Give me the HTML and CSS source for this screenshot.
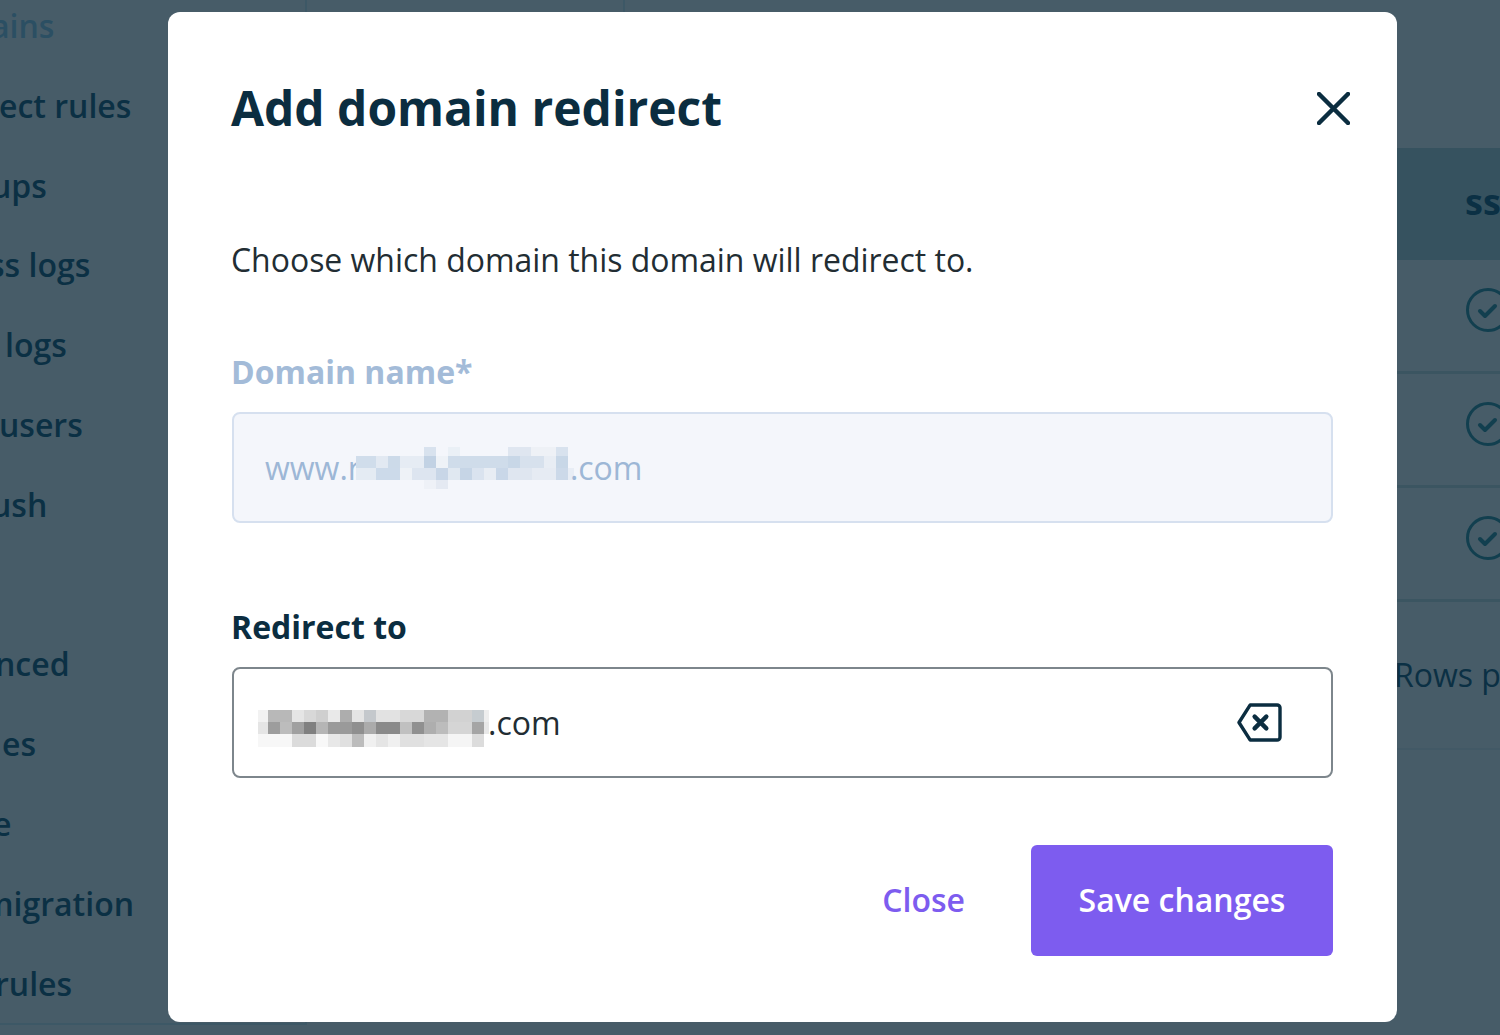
FILE: index.html
```html
<!DOCTYPE html>
<html lang="en">

<head>
    <meta charset="UTF-8">
    <meta name="viewport" content="width=device-width, initial-scale=1.0">
    <title>Add domain redirect</title>
    <link rel="stylesheet" href="styles.css">
</head>

<body>
    <div class="page">
        <ul class="side">
            <li class="faded cut-9">ains</li>
            <li class="cut-1">ect rules</li>
            <li class="cut-9">ups</li>
            <li class="cut-11">ss logs</li>
            <li class="push">logs</li>
            <li class="cut-1">users</li>
            <li class="cut-9">ush</li>
            <li class="empty"></li>
            <li class="cut-5">nced</li>
            <li class="push-2">es</li>
            <li class="cut-7">e</li>
            <li class="cut-17">migration</li>
            <li class="cut-5">rules</li>
        </ul>
        <div class="middle"></div>
        <div class="main">
            <div class="row head"><b>ss</b></div>
            <div class="row">
                <svg class="check" viewBox="0 0 44 44"><circle cx="22" cy="22" r="20.5"/><path d="M14 23l5 5 10-10"/></svg>
            </div>
            <div class="row">
                <svg class="check" viewBox="0 0 44 44"><circle cx="22" cy="22" r="20.5"/><path d="M14 23l5 5 10-10"/></svg>
            </div>
            <div class="row">
                <svg class="check" viewBox="0 0 44 44"><circle cx="22" cy="22" r="20.5"/><path d="M14 23l5 5 10-10"/></svg>
            </div>
            <div class="row foot">Rows p</div>
        </div>
    </div>

    <div class="overlay">
        <div class="modal">
            <div class="modal-top">
                <h2>Add domain redirect</h2>
                <svg class="close-icon" viewBox="0 0 33 33"><path d="M2 2l29 29M31 2L2 31"/></svg>
            </div>
            <p class="desc">Choose which domain this domain will redirect to.</p>

            <label class="label off">Domain name*</label>
            <div class="field disabled">
                <span>www.r</span>
                <svg class="blur blur1" viewBox="0 0 218 42" shape-rendering="crispEdges">
                    <rect x="68" y="0" width="12" height="9" fill="#d8e2ee"/>
                    <rect x="92" y="0" width="12" height="9" fill="#eaf0f6"/>
                    <rect x="152" y="0" width="23" height="9" fill="#dfe6f0"/>
                    <rect x="175" y="0" width="25" height="9" fill="#eef1f6"/>
                    <rect x="200" y="0" width="12" height="9" fill="#d8e2ee"/>
                    <rect x="0" y="9" width="20" height="12" fill="#d0ddeb"/>
                    <rect x="20" y="9" width="12" height="12" fill="#e2e9f2"/>
                    <rect x="32" y="9" width="12" height="12" fill="#ccdae9"/>
                    <rect x="44" y="9" width="24" height="12" fill="#e6ecf4"/>
                    <rect x="68" y="9" width="12" height="12" fill="#c2d2e4"/>
                    <rect x="80" y="9" width="12" height="12" fill="#eef2f7"/>
                    <rect x="92" y="9" width="60" height="12" fill="#cfdcea"/>
                    <rect x="152" y="9" width="12" height="12" fill="#c8d7e7"/>
                    <rect x="164" y="9" width="24" height="12" fill="#d7e1ed"/>
                    <rect x="188" y="9" width="12" height="12" fill="#e8edf4"/>
                    <rect x="200" y="9" width="12" height="12" fill="#c8d7e7"/>
                    <rect x="0" y="21" width="20" height="12" fill="#e4ebf3"/>
                    <rect x="20" y="21" width="24" height="12" fill="#ccdaea"/>
                    <rect x="44" y="21" width="12" height="12" fill="#eef2f7"/>
                    <rect x="56" y="21" width="24" height="12" fill="#dde5f0"/>
                    <rect x="80" y="21" width="12" height="12" fill="#c8d6e7"/>
                    <rect x="92" y="21" width="12" height="12" fill="#e0e8f1"/>
                    <rect x="104" y="21" width="12" height="12" fill="#c6d5e6"/>
                    <rect x="116" y="21" width="12" height="12" fill="#dae3ef"/>
                    <rect x="128" y="21" width="12" height="12" fill="#e8edf4"/>
                    <rect x="140" y="21" width="12" height="12" fill="#c9d7e8"/>
                    <rect x="152" y="21" width="24" height="12" fill="#dfe6f0"/>
                    <rect x="176" y="21" width="24" height="12" fill="#e6ebf3"/>
                    <rect x="200" y="21" width="12" height="12" fill="#ccd9e9"/>
                    <rect x="212" y="21" width="6" height="12" fill="#e8edf5"/>
                    <rect x="68" y="33" width="12" height="9" fill="#eef1f7"/>
                    <rect x="80" y="33" width="12" height="9" fill="#e4e9f2"/>
                </svg>
                <span>.com</span>
            </div>

            <label class="label">Redirect to</label>
            <div class="field">
                <svg class="blur blur2" viewBox="0 0 231 37" shape-rendering="crispEdges">
                    <rect x="0" y="0" width="10" height="12" fill="#f2f2f2"/>
                    <rect x="10" y="0" width="24" height="12" fill="#b8b8b8"/>
                    <rect x="34" y="0" width="12" height="12" fill="#e5e5e5"/>
                    <rect x="46" y="0" width="12" height="12" fill="#d8d8d8"/>
                    <rect x="58" y="0" width="12" height="12" fill="#cfcfcf"/>
                    <rect x="70" y="0" width="12" height="12" fill="#e9e9e9"/>
                    <rect x="82" y="0" width="12" height="12" fill="#adadad"/>
                    <rect x="94" y="0" width="12" height="12" fill="#e4e4e4"/>
                    <rect x="106" y="0" width="12" height="12" fill="#c4c8cc"/>
                    <rect x="118" y="0" width="24" height="12" fill="#e2e2e2"/>
                    <rect x="142" y="0" width="24" height="12" fill="#d8d8d8"/>
                    <rect x="166" y="0" width="24" height="12" fill="#b2b2b2"/>
                    <rect x="190" y="0" width="24" height="12" fill="#d2d2d2"/>
                    <rect x="214" y="0" width="12" height="12" fill="#c6ccd0"/>
                    <rect x="226" y="0" width="5" height="12" fill="#eeeeee"/>
                    <rect x="0" y="12" width="10" height="12" fill="#e5e5e5"/>
                    <rect x="10" y="12" width="12" height="12" fill="#9d9d9d"/>
                    <rect x="22" y="12" width="12" height="12" fill="#bcbcbc"/>
                    <rect x="34" y="12" width="12" height="12" fill="#a0a0a0"/>
                    <rect x="46" y="12" width="12" height="12" fill="#808080"/>
                    <rect x="58" y="12" width="12" height="12" fill="#b5b5b5"/>
                    <rect x="70" y="12" width="24" height="12" fill="#9a9a9a"/>
                    <rect x="94" y="12" width="12" height="12" fill="#8f8f8f"/>
                    <rect x="106" y="12" width="12" height="12" fill="#ababab"/>
                    <rect x="118" y="12" width="24" height="12" fill="#8a8a8a"/>
                    <rect x="142" y="12" width="12" height="12" fill="#c0c0c0"/>
                    <rect x="154" y="12" width="12" height="12" fill="#909090"/>
                    <rect x="166" y="12" width="12" height="12" fill="#aeaeae"/>
                    <rect x="178" y="12" width="12" height="12" fill="#bcbcbc"/>
                    <rect x="190" y="12" width="24" height="12" fill="#d5d5d5"/>
                    <rect x="214" y="12" width="12" height="12" fill="#a5a5a5"/>
                    <rect x="226" y="12" width="5" height="12" fill="#e8e8e8"/>
                    <rect x="0" y="24" width="34" height="13" fill="#f7f7f7"/>
                    <rect x="34" y="24" width="24" height="13" fill="#dbdbdb"/>
                    <rect x="58" y="24" width="12" height="13" fill="#f8f8f8"/>
                    <rect x="70" y="24" width="12" height="13" fill="#e8e8e8"/>
                    <rect x="82" y="24" width="12" height="13" fill="#e0e0e0"/>
                    <rect x="94" y="24" width="12" height="13" fill="#bcbcbc"/>
                    <rect x="106" y="24" width="12" height="13" fill="#f0f0f0"/>
                    <rect x="118" y="24" width="12" height="13" fill="#e5e5e5"/>
                    <rect x="130" y="24" width="12" height="13" fill="#f0f0f0"/>
                    <rect x="142" y="24" width="24" height="13" fill="#e0e0e0"/>
                    <rect x="166" y="24" width="24" height="13" fill="#e5e5e5"/>
                    <rect x="190" y="24" width="24" height="13" fill="#f5f5f5"/>
                    <rect x="214" y="24" width="12" height="13" fill="#dcdcdc"/>
                </svg>
                <span>.com</span>
                <svg class="clear-icon" viewBox="0 0 46 42"><path d="M2 21L13.5 3H41a3 3 0 0 1 3 3v30a3 3 0 0 1-3 3H13.5z"/><path class="thick" d="M18 15l12 12M30 15L18 27"/></svg>
            </div>

            <div class="actions">
                <a class="close-link">Close</a>
                <button class="save">Save changes</button>
            </div>
        </div>
    </div>
</body>

</html>
```

FILE: styles.css
```css
* {
    margin: 0;
    padding: 0;
    box-sizing: border-box;
}

html,
body {
    height: 100%;
    overflow: hidden;
}

body {
    font-family: "Open Sans", "Liberation Sans", sans-serif;
    color: #0b3044;
    background: #475c68;
}

.page {
    display: flex;
    height: 1035px;
    overflow: hidden;
}

/* sidebar, cut by the left edge of the window */
.side {
    flex: 0 0 307px;
    height: 1025px;
    border-right: 2px solid #3d5866;
    border-bottom: 2px solid #3d5866;
    list-style: none;
    overflow: hidden;
}

.side li {
    height: 79.8px;
    line-height: 80px;
    font-size: 32px;
    font-weight: 600;
    white-space: nowrap;
    position: relative;
    top: -14px;
}

.side .faded {
    color: #2b4f63;
}

.side .cut-1 {
    text-indent: -1px;
}

.side .cut-5 {
    text-indent: -5px;
}

.side .cut-7 {
    text-indent: -7px;
}

.side .cut-9 {
    text-indent: -9px;
}

.side .cut-11 {
    text-indent: -11px;
}

.side .cut-17 {
    text-indent: -17px;
}

.side .push {
    text-indent: 5px;
}

.side .push-2 {
    text-indent: 2px;
}

.middle {
    flex: 0 0 318px;
    height: 12px;
    border-right: 2px solid #3d5866;
}

.main {
    flex: 1;
    padding-top: 148px;
    min-width: 0;
}

.row {
    display: flex;
    align-items: center;
    height: 114px;
    padding-left: 841px;
    padding-bottom: 12px;
    border-bottom: 3px solid #3b5561;
    white-space: nowrap;
    font-size: 32px;
}

.head {
    height: 112px;
    padding-left: 840px;
    padding-bottom: 0;
    background: #36525f;
    border-bottom: 0;
    font-size: 36px;
}

.head b {
    position: relative;
    top: -3px;
}

.foot {
    height: 148px;
    padding-left: 769px;
    padding-bottom: 2px;
    border-bottom: 2px solid #425966;
}

.check {
    flex: none;
    width: 44px;
    height: 44px;
    fill: none;
    stroke: #123f4f;
    stroke-width: 3;
}

.check path {
    stroke-width: 4;
    stroke-linecap: round;
    stroke-linejoin: round;
}

/* modal */
.overlay {
    position: fixed;
    top: 0;
    left: 0;
    width: 100%;
    height: 100%;
    padding: 12px 103px 13px 168px;
}

.modal {
    height: 1010px;
    padding: 64px 64px 0;
    background: #fff;
    border-radius: 12px;
}

.modal-top {
    display: flex;
    justify-content: space-between;
    align-items: center;
    height: 64px;
}

h2 {
    margin-left: -1px;
    font-size: 47.9px;
    font-weight: 700;
    line-height: 64px;
    color: #0b2d40;
}

.close-icon {
    width: 33px;
    height: 33px;
    margin-right: -17px;
    fill: none;
    stroke: #0b2d40;
    stroke-width: 4.5;
    stroke-linecap: round;
}

.desc {
    margin-top: 96px;
    margin-left: -1px;
    font-size: 31.95px;
    line-height: 48px;
    color: #222d33;
}

.label {
    display: block;
    margin-top: 64px;
    margin-left: -1px;
    font-size: 32px;
    font-weight: 700;
    line-height: 48px;
    color: #0b2d40;
}

.off {
    color: #a3bbd8;
}

.field {
    display: flex;
    align-items: center;
    height: 111px;
    margin-top: 16px;
    padding-left: 24px;
    border: 2px solid #7d868c;
    border-radius: 8px;
    font-size: 32px;
    color: #222d33;
}

.disabled {
    padding-left: 31px;
    background: #f4f6fb;
    border-color: #d6e0ef;
    color: #9db7d6;
}

.field + .label {
    margin-top: 80px;
}

.blur {
    flex: none;
}

.blur1 {
    width: 218px;
    height: 42px;
    margin-left: -5px;
    margin-right: -4px;
}

.blur2 {
    width: 231px;
    height: 37px;
    margin-top: 12px;
    margin-right: -1px;
}

.clear-icon {
    width: 45px;
    height: 41px;
    margin-left: auto;
    margin-right: 49px;
    fill: none;
    stroke: #0b2d40;
    stroke-width: 3.5;
    stroke-linejoin: round;
}

.clear-icon .thick {
    stroke-width: 4.5;
    stroke-linecap: round;
}

.actions {
    display: flex;
    justify-content: flex-end;
    align-items: center;
    gap: 66px;
    margin-top: 67px;
}

.close-link {
    margin-bottom: 2px;
    font-size: 32px;
    font-weight: 600;
    color: #7d5cef;
}

.save {
    width: 302px;
    height: 111px;
    padding-bottom: 2px;
    border: 0;
    border-radius: 6px;
    background: #7d5cef;
    color: #fff;
    font-family: inherit;
    font-size: 32px;
    font-weight: 600;
}
```
